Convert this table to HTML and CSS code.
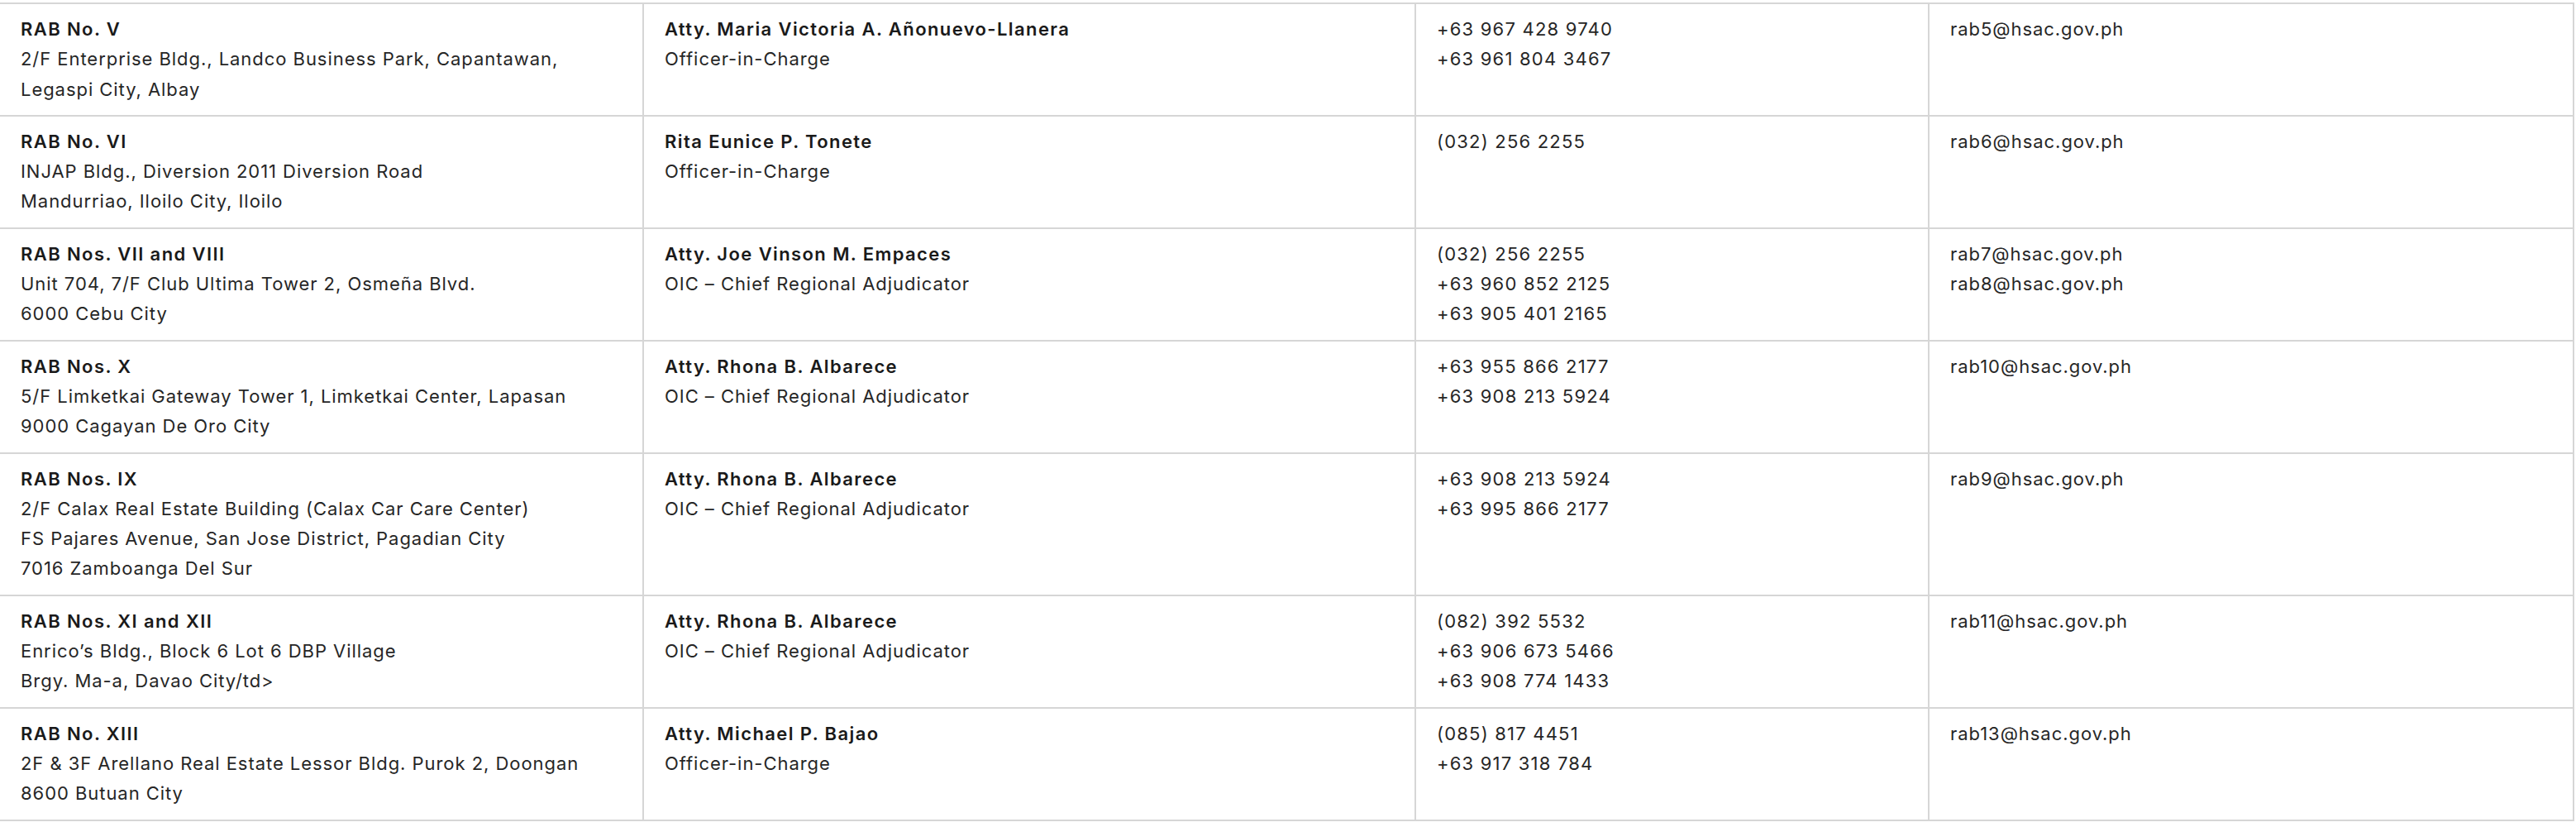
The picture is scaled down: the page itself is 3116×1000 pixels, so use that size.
FILE: index.html
```html
<!DOCTYPE html>
<html lang="en">
<head>
<meta charset="utf-8">
<title>RAB Directory</title>
<link rel="stylesheet" href="styles.css">
</head>
<body>
<table class="directory">
  <colgroup>
    <col class="c-office">
    <col class="c-head">
    <col class="c-phone">
    <col class="c-email">
  </colgroup>
  <tbody>
    <tr>
      <td><strong>RAB No. V</strong><br>2/F Enterprise Bldg., Landco Business Park, Capantawan,<br>Legaspi City, Albay</td>
      <td><strong>Atty. Maria Victoria A. Añonuevo-Llanera</strong><br>Officer-in-Charge</td>
      <td class="phone">+63 967 428 9740<br>+63 961 804 3467</td>
      <td>rab5@hsac.gov.ph</td>
    </tr>
    <tr>
      <td><strong>RAB No. VI</strong><br>INJAP Bldg., Diversion 2011 Diversion Road<br>Mandurriao, Iloilo City, Iloilo</td>
      <td><strong>Rita Eunice P. Tonete</strong><br>Officer-in-Charge</td>
      <td class="phone">(032) 256 2255</td>
      <td>rab6@hsac.gov.ph</td>
    </tr>
    <tr>
      <td><strong>RAB Nos. VII and VIII</strong><br>Unit 704, 7/F Club Ultima Tower 2, Osmeña Blvd.<br>6000 Cebu City</td>
      <td><strong>Atty. Joe Vinson M. Empaces</strong><br>OIC – Chief Regional Adjudicator</td>
      <td class="phone">(032) 256 2255<br>+63 960 852 2125<br>+63 905 401 2165</td>
      <td>rab7@hsac.gov.ph<br>rab8@hsac.gov.ph</td>
    </tr>
    <tr>
      <td><strong>RAB Nos. X</strong><br>5/F Limketkai Gateway Tower 1, Limketkai Center, Lapasan<br>9000 Cagayan De Oro City</td>
      <td><strong>Atty. Rhona B. Albarece</strong><br>OIC – Chief Regional Adjudicator</td>
      <td class="phone">+63 955 866 2177<br>+63 908 213 5924</td>
      <td>rab10@hsac.gov.ph</td>
    </tr>
    <tr>
      <td><strong>RAB Nos. IX</strong><br>2/F Calax Real Estate Building (Calax Car Care Center)<br>FS Pajares Avenue, San Jose District, Pagadian City<br>7016 Zamboanga Del Sur</td>
      <td><strong>Atty. Rhona B. Albarece</strong><br>OIC – Chief Regional Adjudicator</td>
      <td class="phone">+63 908 213 5924<br>+63 995 866 2177</td>
      <td>rab9@hsac.gov.ph</td>
    </tr>
    <tr>
      <td><strong>RAB Nos. XI and XII</strong><br>Enrico’s Bldg., Block 6 Lot 6 DBP Village<br>Brgy. Ma-a, Davao City/td&gt;</td>
      <td><strong>Atty. Rhona B. Albarece</strong><br>OIC – Chief Regional Adjudicator</td>
      <td class="phone">(082) 392 5532<br>+63 906 673 5466<br>+63 908 774 1433</td>
      <td>rab11@hsac.gov.ph</td>
    </tr>
    <tr>
      <td><strong>RAB No. XIII</strong><br>2F &amp; 3F Arellano Real Estate Lessor Bldg. Purok 2, Doongan<br>8600 Butuan City</td>
      <td><strong>Atty. Michael P. Bajao</strong><br>Officer-in-Charge</td>
      <td class="phone">(085) 817 4451<br>+63 917 318 784</td>
      <td>rab13@hsac.gov.ph</td>
    </tr>
  </tbody>
</table>
</body>
</html>
```

FILE: styles.css
```css
html, body {
  margin: 0;
  padding: 0;
  background: #ffffff;
}

body {
  padding-top: 3px;
  font-family: Inter, "Noto Sans", "Liberation Sans", sans-serif;
  font-size: 22px;
  line-height: 36.3px;
  letter-spacing: 0.95px;
  color: #262626;
}

.directory {
  width: 3113px;
  border-collapse: collapse;
  table-layout: fixed;
}

.c-office { width: 778px; }
.c-head { width: 934px; }
.c-phone { width: 621px; }
.c-email { width: 780px; }

.directory td {
  vertical-align: top;
  padding: 12px 24px 13px 25px;
  border: 2px solid #d6d6d6;
  text-align: left;
}

.directory td:first-child {
  border-left: none;
}

.directory td.phone {
  letter-spacing: 1.2px;
}

.directory strong {
  font-weight: 600;
  letter-spacing: 1.4px;
  color: #1a1a1a;
}
```
